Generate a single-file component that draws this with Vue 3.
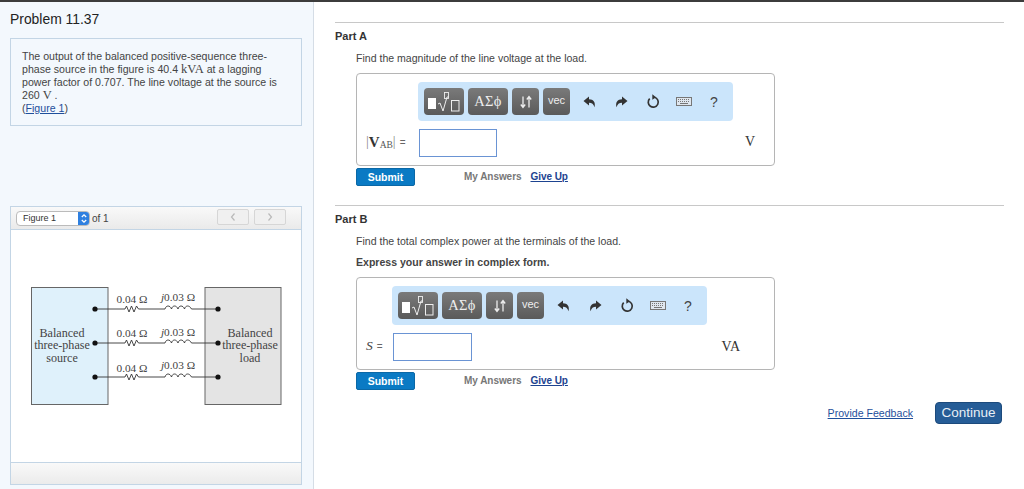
<script setup>
const parts = [
  {
    id: 'a', name: 'Part A',
    lines: [{ text: 'Find the magnitude of the line voltage at the load.', cls: 'prompt first' }],
    unit: 'V'
  },
  {
    id: 'b', name: 'Part B',
    lines: [
      { text: 'Find the total complex power at the terminals of the load.', cls: 'prompt first' },
      { text: 'Express your answer in complex form.', cls: 'prompt strong' }
    ],
    unit: 'VA'
  }
]
const wires = [
  { y: 309, r: 303, j: 301 },
  { y: 343, r: 337, j: 336 },
  { y: 377, r: 372, j: 369 }
]
</script>

<template>
  <div class="page">
    <aside class="left">
      <h1 class="title">Problem 11.37</h1>
      <div class="statement">
        The output of the balanced positive-sequence three-<br>
        phase source in the figure is 40.4 <span class="math">kVA</span> at a lagging<br>
        power factor of 0.707. The line voltage at the source is<br>
        260 <span class="math">V</span> .<br>
        (<a class="flink">Figure 1</a>)
      </div>
      <section class="figure">
        <div class="fig-head">
          <div class="select">
            <span class="select-text">Figure 1</span>
            <span class="stepper">
              <svg width="12" height="15" viewBox="0 0 12 15"><path d="M3.8 6 6 3.8 8.2 6M3.8 9 6 11.2 8.2 9" fill="none" stroke="#fff" stroke-width="1.2"/></svg>
            </span>
          </div>
          <span class="of">of 1</span>
          <div class="pager">
            <span class="page-btn"><svg width="8" height="10" viewBox="0 0 8 10"><path d="M5.5 1.5 2.5 5l3 3.5" fill="none" stroke="#b9b9b9" stroke-width="1.2"/></svg></span>
            <span class="page-btn"><svg width="8" height="10" viewBox="0 0 8 10"><path d="M2.5 1.5 5.5 5l-3 3.5" fill="none" stroke="#b9b9b9" stroke-width="1.2"/></svg></span>
          </div>
        </div>
        <div class="fig-body">
          <svg class="diagram" width="290" height="233" viewBox="11 230 290 233">
            <rect x="31.5" y="287.5" width="76.5" height="117" fill="#dff1fb" stroke="#666"/>
            <rect x="205" y="287.5" width="76" height="117" fill="#e4e4e4" stroke="#666"/>
            <g v-for="w in wires" :key="w.y">
              <path :d="`M95 ${w.y}H125l1.5 -3 2.5 6 2.5 -6 2.5 6 2.5 -6 2 3H165c1 -4 5 -4 6.500 0c1 -4 5 -4 6.500 0c1 -4 5 -4 6.500 0c1 -4 5 -4 7 0H218`" fill="none" stroke="#333" stroke-width="0.9"/>
              <circle cx="95" :cy="w.y" r="2.600" fill="#111"/>
              <circle cx="218" :cy="w.y" r="2.600" fill="#111"/>
              <text class="dv" x="132" :y="w.r" text-anchor="middle">0.04 Ω</text>
              <text class="dv" x="178" :y="w.j" text-anchor="middle"><tspan font-style="italic">j</tspan>0.03 Ω</text>
            </g>
            <text class="dt" x="62" y="337" text-anchor="middle">Balanced</text>
            <text class="dt" x="62" y="349" text-anchor="middle">three-phase</text>
            <text class="dt" x="62" y="362" text-anchor="middle">source</text>
            <text class="dt" x="250" y="337" text-anchor="middle">Balanced</text>
            <text class="dt" x="250" y="349" text-anchor="middle">three-phase</text>
            <text class="dt" x="250" y="362" text-anchor="middle">load</text>
          </svg>
        </div>
        <div class="fig-foot"></div>
      </section>
    </aside>

    <main class="right">
      <section v-for="p in parts" :key="p.id" class="part" :class="'part-' + p.id">
        <h2 class="part-name">{{ p.name }}</h2>
        <div class="part-inner">
          <p v-for="l in p.lines" :key="l.text" :class="l.cls">{{ l.text }}</p>
          <div class="answer">
            <div class="toolbar">
              <span class="tb tb1">
                <span class="solid"></span>
                <svg width="24" height="22" viewBox="0 0 24 22">
                  <rect x="7.500" y="1.500" width="4" height="6" fill="none" stroke="#eee" stroke-width=".9"/>
                  <path d="M1 13l2 -1 3 8 4 -14h2" fill="none" stroke="#eee" stroke-width="1"/>
                  <rect x="14.500" y="9.500" width="7.500" height="10.500" fill="none" stroke="#eee" stroke-width="1"/>
                </svg>
              </span>
              <span class="tb tb2">ΑΣϕ</span>
              <span class="tb tb3">
                <svg width="14" height="14" viewBox="0 0 14 14"><path d="M4 1.500V12M1.800 9.500 4 12.500 6.200 9.500M10 12.500V2M7.800 4.500 10 1.500 12.200 4.500" fill="none" stroke="#eee" stroke-width="1.300"/></svg>
              </span>
              <span class="tb tb4">vec</span>
              <span class="ic ic-undo"><svg width="14" height="12" viewBox="0 0 14 12"><path d="M6 0.500 0.500 5 6 9.500V6.700c3 0 4.500 1.300 5.500 4.600C12.800 6.500 10.500 3.300 6 3.300z" fill="#333"/></svg></span>
              <span class="ic ic-redo"><svg width="14" height="12" viewBox="0 0 14 12"><path d="M8 0.500 13.500 5 8 9.500V6.700c-3 0-4.500 1.300-5.500 4.600C1.200 6.500 3.500 3.300 8 3.300z" fill="#333"/></svg></span>
              <span class="ic ic-reset"><svg width="14" height="15" viewBox="0 0 14 15"><path d="M8.500 3.300A5 5 0 1 1 3.700 4.600" fill="none" stroke="#333" stroke-width="1.700"/><path d="M6.300 0.300 10 3.300 6.300 5.800z" fill="#333"/></svg></span>
              <span class="ic ic-key"><svg width="16" height="9" viewBox="0 0 16 9"><rect x=".5" y=".5" width="15" height="8" fill="#dfe6ee" stroke="#777"/><path d="M2 2.500h12M2 4.500h12" stroke="#777" stroke-dasharray="1 1"/><path d="M4 6.500h8" stroke="#777"/></svg></span>
              <span class="ic ic-help">?</span>
            </div>
            <div class="entry">
              <span class="label">
                <template v-if="p.id === 'a'"><span class="bar">|</span><b class="var">V</b><span class="sub">AB</span><span class="bar">|</span><span class="eq">=</span></template>
                <template v-else><i class="var-s">S</i><span class="eq">=</span></template>
              </span>
              <span class="input"></span>
              <span class="unit">{{ p.unit }}</span>
            </div>
          </div>
          <div class="actions">
            <span class="submit">Submit</span>
            <span class="my">My Answers</span>
            <a class="giveup">Give Up</a>
          </div>
        </div>
      </section>
      <div class="footer">
        <a class="feedback">Provide Feedback</a>
        <span class="continue">Continue</span>
      </div>
    </main>
  </div>
</template>

<style scoped>
.page { display: flex; width: 1024px; height: 489px; overflow: hidden; border-top: 2px solid #3c3c3c; box-sizing: border-box; background: #fff; font-family: "Liberation Sans", Arial, sans-serif; color: #333; }
.left { width: 314px; flex: none; box-sizing: border-box; padding: 10px 11px 0 10px; background: #f3f8fd; border-right: 1px solid #d5dde6; }
.title { margin: 0; font-size: 13.9px; font-weight: 400; line-height: 15px; color: #222; }
.statement { margin-top: 11px; height: 88px; box-sizing: border-box; padding: 11px 11px 0; background: #f3f8fd; border: 1px solid #c3d5e5; font-size: 10.6px; line-height: 13px; color: #444; }
.math { font-family: "Liberation Serif", serif; font-size: 12.5px; line-height: 12px; }
.flink { color: #1f4f9c; text-decoration: underline; }
.figure { margin-top: 80px; height: 279px; box-sizing: border-box; border: 1px solid #c3d5e5; display: flex; flex-direction: column; background: #fff; }
.fig-head { height: 23px; flex: none; box-sizing: border-box; padding: 4px 15px 0 5px; display: flex; align-items: flex-start; background: linear-gradient(#f9f9f9, #eaeaea); border-bottom: 1px solid #c3d5e5; }
.select { width: 74px; height: 15px; box-sizing: border-box; background: #fff; border: 1px solid #bbb; border-radius: 4px; display: flex; overflow: hidden; position: relative; }
.select-text { flex: 1; font-size: 9px; line-height: 13px; padding-left: 6px; color: #333; }
.stepper { width: 12px; margin: -1px -1px -1px 0; height: 15px; background: #2f80e0; display: block; }
.stepper svg { display: block; }
.of { font-size: 10px; line-height: 15px; margin-left: 2px; color: #444; }
.pager { margin-left: auto; margin-top: -2px; display: flex; gap: 5px; }
.page-btn { width: 32px; height: 16px; box-sizing: border-box; border: 1px solid #d6d6d6; border-radius: 2px; background: #f0f0f0; display: flex; align-items: center; justify-content: center; }
.fig-body { flex: 1; min-height: 0; }
.diagram { display: block; }
.dt { font-family: "Liberation Serif", serif; font-size: 12.1px; fill: #444; }
.dv { font-family: "Liberation Serif", serif; font-size: 11.3px; fill: #444; }
.fig-foot { height: 21px; flex: none; background: linear-gradient(#f9f9f9, #ebebeb); border-top: 1px solid #c3d5e5; }

.right { flex: 1; padding: 20px 20px 0 21px; min-width: 0; }
.part { border-top: 1px solid #c8c8c8; }
.part-a { height: 182px; }
.part-b { height: 189px; }
.part-name { margin: 0; padding-top: 7px; font-size: 11px; font-weight: 700; line-height: 13px; color: #333; }
.part-inner { padding-left: 21px; }
.prompt { margin: 0; font-size: 10.55px; line-height: 13px; color: #444; }
.prompt.first { margin-top: 9px; }
.prompt.strong { margin-top: 8px; font-weight: 700; }
.answer { margin-top: 8px; width: 419px; height: 93px; box-sizing: border-box; border: 1px solid #b5b5b5; border-radius: 4px; }
.toolbar { margin: 8px 0 0 61px; width: 315px; height: 39px; box-sizing: border-box; padding: 6px 0 0 6px; border-radius: 4px; background: #cbe5fb; display: flex; align-items: flex-start; gap: 4px; position: relative; }
.part-b .toolbar { margin-left: 35px; }
.tb { height: 27px; box-sizing: border-box; border-radius: 4px; background: linear-gradient(#7a7a7a, #5a5a5a); color: #eee; display: flex; align-items: center; justify-content: center; }
.tb1 { width: 40px; gap: 1px; }
.solid { width: 8px; height: 11px; background: #fff; margin-top: 3px; }
.tb2 { width: 40px; font-family: "Liberation Serif", serif; font-size: 14.5px; letter-spacing: .3px; }
.tb3 { width: 27px; }
.tb4 { width: 27px; font-size: 11px; padding-bottom: 3px; }
.ic { position: absolute; top: 0; height: 39px; display: flex; align-items: center; justify-content: center; width: 20px; }
.ic-undo { left: 162px; }
.ic-redo { left: 193px; }
.ic-reset { left: 225px; }
.ic-key { left: 256px; }
.ic-help { left: 286px; font-size: 14px; color: #444; }
.entry { margin-top: 8px; display: flex; align-items: center; height: 28px; padding-left: 9px; }
.label { width: 53px; flex: none; display: flex; align-items: center; font-family: "Liberation Serif", serif; font-size: 13px; color: #444; margin-bottom: 2px; }
.part-b .label { width: 27px; margin-bottom: 2px; }
.bar { color: #888; font-size: 14px; }
.var { color: #333; font-size: 15px; }
.sub { font-size: 9.5px; margin-top: 5px; color: #555; }
.var-s { font-size: 13.5px; }
.eq { margin-left: 4px; font-family: "Liberation Sans", sans-serif; font-size: 10px; color: #666; }
.input { width: 78px; height: 28px; box-sizing: border-box; border: 1px solid #6a94d4; background: #fff; flex: none; }
.part-b .input { width: 79px; }
.unit { margin-left: auto; padding-right: 19px; margin-bottom: 2px; font-family: "Liberation Serif", serif; font-size: 14px; color: #333; }
.part-b .unit { padding-right: 34px; margin-bottom: 0; }
.actions { margin-top: 2px; display: flex; align-items: center; height: 18px; font-size: 10px; font-weight: 700; }
.submit { width: 59px; height: 18px; box-sizing: border-box; background: #0a7ac4; border: 1px solid #0b68a6; border-radius: 2px; color: #fff; text-align: center; font-size: 10.5px; line-height: 16px; }
.my { margin-left: 49px; margin-bottom: 2px; color: #777; letter-spacing: -0.05px; }
.giveup { margin-left: 9px; margin-bottom: 2px; color: #1d4390; text-decoration: underline; letter-spacing: -0.05px; }
.footer { display: flex; align-items: center; justify-content: flex-end; margin-top: 7px; height: 22px; padding-right: 2px; }
.feedback { font-size: 10.6px; color: #1f4f9c; text-decoration: underline; margin-right: 22px; }
.continue { width: 67px; height: 22px; box-sizing: border-box; border: 1px solid #1c4a7c; border-radius: 4px; background: #265d97; color: #e8eff6; text-align: center; font-size: 13.5px; line-height: 19px; }
</style>

<style>
html, body { margin: 0; padding: 0; overflow: hidden; background: #fff; }
</style>
